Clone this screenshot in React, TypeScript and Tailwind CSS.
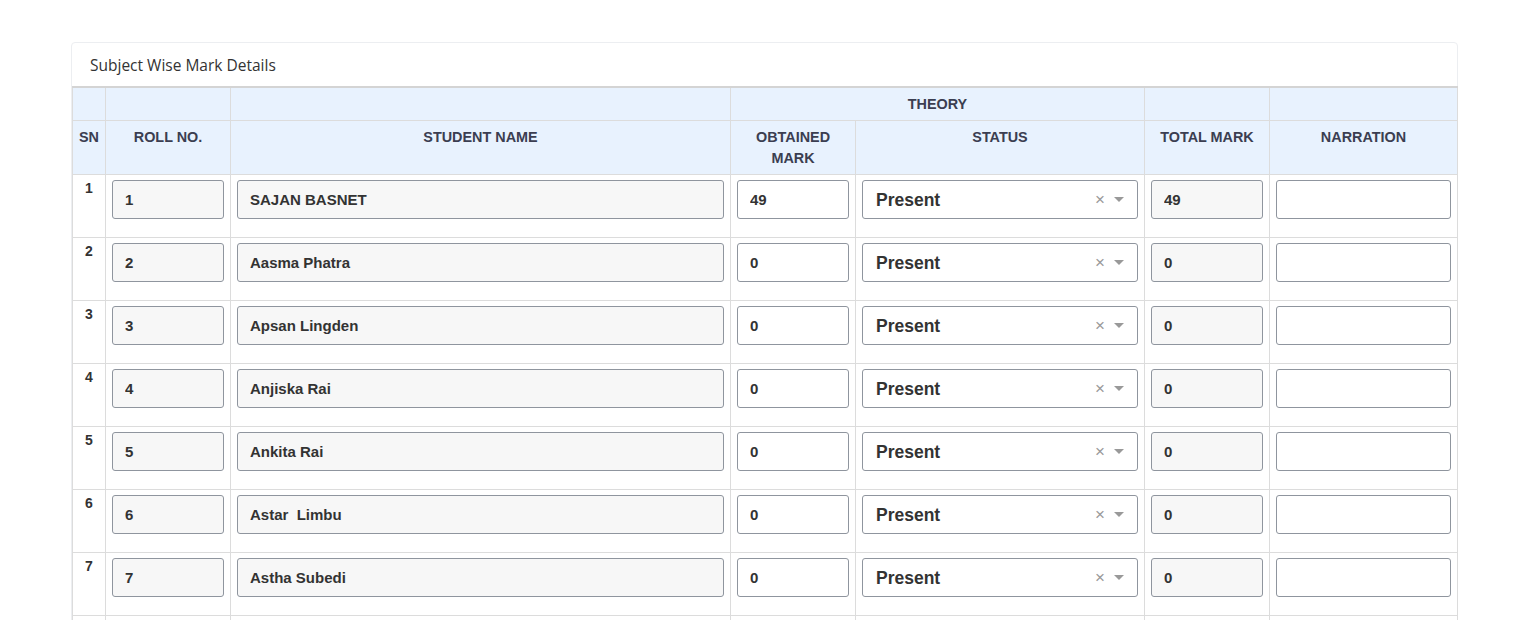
import React from "react";

const rows = [
  { sn: 1, roll: "1", name: "SAJAN BASNET", ob: "49", total: "49" },
  { sn: 2, roll: "2", name: "Aasma Phatra", ob: "0", total: "0" },
  { sn: 3, roll: "3", name: "Apsan Lingden", ob: "0", total: "0" },
  { sn: 4, roll: "4", name: "Anjiska Rai", ob: "0", total: "0" },
  { sn: 5, roll: "5", name: "Ankita Rai", ob: "0", total: "0" },
  { sn: 6, roll: "6", name: "Astar  Limbu", ob: "0", total: "0" },
  { sn: 7, roll: "7", name: "Astha Subedi", ob: "0", total: "0" },
];

const inputBase =
  "block h-[39px] w-full rounded-[3px] border border-[#8f959e] px-[12px] text-[15px] font-bold text-[#333] outline-none";

function Field({ value, ro }: { value: string; ro?: boolean }) {
  return (
    <input
      readOnly
      value={value}
      className={inputBase + (ro ? " bg-[#f7f7f7]" : " bg-white")}
    />
  );
}

function StatusSelect() {
  return (
    <div className="flex h-[39px] w-full items-center rounded-[3px] border border-[#8f959e] bg-white pl-[13px] pr-[13px]">
      <span className="flex-1 pt-[2px] text-[17.5px] font-bold text-[#333]">Present</span>
      <span className="mr-[9px] text-[17px] leading-none text-[#999]">×</span>
      <span className="h-0 w-0 border-x-[5px] border-t-[5px] border-x-transparent border-t-[#999]" />
    </div>
  );
}

const th =
  "border border-[#dcdcdc] bg-[#e8f2fe] align-top px-[4px] pt-[6px] text-center text-[14.4px] font-bold leading-[21px] text-[#3b3e51]";
const td = "border border-[#dcdcdc] align-top px-[6px] pt-[5px] pb-[17px]";

export default function App() {
  return (
    <div
      className="h-[620px] overflow-hidden bg-white pl-[71px] pt-[42px]"
      style={{ fontFamily: '"Liberation Sans", Arial, sans-serif' }}
    >
      <div className="w-[1387px] rounded-t-[4px] border border-[#eceef1] bg-white">
        <div
          className="flex h-[43px] items-center pl-[18px] pt-[2px] text-[15.5px] text-[#333]"
          style={{ fontFamily: '"Open Sans", "Noto Sans", sans-serif' }}
        >
          Subject Wise Mark Details
        </div>
        <table className="w-[1385px] table-fixed border-collapse border-t-2 border-t-[#d4d4d4]">
          <colgroup>
            <col className="w-[33px]" />
            <col className="w-[125px]" />
            <col className="w-[500px]" />
            <col className="w-[125px]" />
            <col className="w-[289px]" />
            <col className="w-[125px]" />
            <col className="w-[188px]" />
          </colgroup>
          <thead>
            <tr className="h-[33px]">
              <th className={th}></th>
              <th className={th}></th>
              <th className={th}></th>
              <th className={th} colSpan={2}>
                THEORY
              </th>
              <th className={th}></th>
              <th className={th}></th>
            </tr>
            <tr className="h-[54px]">
              <th className={th + " px-0"}>SN</th>
              <th className={th}>ROLL NO.</th>
              <th className={th}>STUDENT NAME</th>
              <th className={th}>
                OBTAINED
                <br />
                MARK
              </th>
              <th className={th}>STATUS</th>
              <th className={th}>TOTAL MARK</th>
              <th className={th}>NARRATION</th>
            </tr>
          </thead>
          <tbody>
            {rows.map((r) => (
              <tr key={r.sn} className="h-[63px]">
                <td className="border border-[#dcdcdc] pt-[3px] text-center align-top text-[14px] font-bold leading-[20px] text-[#333]">
                  {r.sn}
                </td>
                <td className={td}>
                  <Field value={r.roll} ro />
                </td>
                <td className={td}>
                  <Field value={r.name} ro />
                </td>
                <td className={td}>
                  <Field value={r.ob} />
                </td>
                <td className={td}>
                  <StatusSelect />
                </td>
                <td className={td}>
                  <Field value={r.total} ro />
                </td>
                <td className={td}>
                  <Field value="" />
                </td>
              </tr>
            ))}
            <tr className="h-[63px]">
              <td className="border border-[#dcdcdc]"></td>
              <td className="border border-[#dcdcdc]"></td>
              <td className="border border-[#dcdcdc]"></td>
              <td className="border border-[#dcdcdc]"></td>
              <td className="border border-[#dcdcdc]"></td>
              <td className="border border-[#dcdcdc]"></td>
              <td className="border border-[#dcdcdc]"></td>
            </tr>
          </tbody>
        </table>
      </div>
    </div>
  );
}
